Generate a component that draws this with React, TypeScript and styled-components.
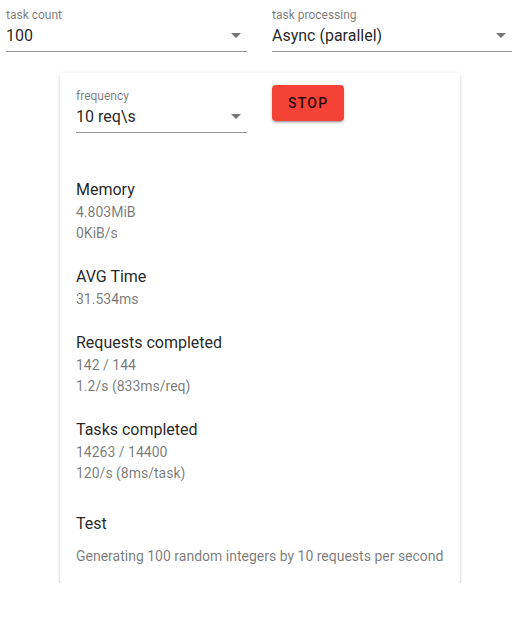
import React from "react";
import styled, { createGlobalStyle } from "styled-components";

const GlobalStyle = createGlobalStyle`
  html, body { margin: 0; padding: 0; background: #fff; }
  body { font-family: Roboto, "Liberation Sans", Arial, sans-serif; color: rgba(0,0,0,0.87); }
`;

const Page = styled.div`
  padding: 8px 4px 0 6px;
`;

const TopRow = styled.div`
  display: grid;
  grid-template-columns: 241px 240px;
  column-gap: 25px;
`;

const Field = styled.div<{ $width?: number }>`
  display: flex;
  flex-direction: column;
  width: ${(p) => (p.$width ? `${p.$width}px` : "auto")};
`;

const Label = styled.div`
  font-size: 12px;
  line-height: 14px;
  color: rgba(0, 0, 0, 0.54);
`;

const ValueRow = styled.div`
  margin-top: 4px;
  display: flex;
  align-items: center;
  justify-content: space-between;
  font-size: 16px;
  line-height: 19px;
  padding-bottom: 6px;
  border-bottom: 1px solid rgba(0, 0, 0, 0.42);
  color: rgba(0, 0, 0, 0.87);
`;

const Arrow = styled.span`
  width: 0;
  height: 0;
  margin-right: 6px;
  border-left: 5px solid transparent;
  border-right: 5px solid transparent;
  border-top: 5px solid rgba(0, 0, 0, 0.54);
`;

const Card = styled.div`
  width: 400px;
  margin: 21px 0 0 54px;
  box-sizing: border-box;
  padding: 12px 16px 16px 16px;
  background: #fff;
  border-radius: 2px;
  box-shadow: 0px 3px 1px -2px rgba(0, 0, 0, 0.2), 0px 2px 2px 0px rgba(0, 0, 0, 0.14),
    0px 1px 5px 0px rgba(0, 0, 0, 0.12);
`;

const CardHeader = styled.div`
  display: grid;
  grid-template-columns: 171px auto;
  column-gap: 25px;
  align-items: start;
`;

const FieldWrap = styled.div`
  padding-top: 4px;
`;

const StopButton = styled.button`
  justify-self: start;
  height: 36px;
  padding: 0 16px;
  border: none;
  border-radius: 4px;
  background: #f44336;
  color: rgba(0, 0, 0, 0.87);
  font-family: Roboto, "Liberation Sans", Arial, sans-serif;
  font-size: 14px;
  font-weight: 500;
  letter-spacing: 1.25px;
  text-transform: uppercase;
  box-shadow: 0px 3px 1px -2px rgba(0, 0, 0, 0.2), 0px 2px 2px 0px rgba(0, 0, 0, 0.14),
    0px 1px 5px 0px rgba(0, 0, 0, 0.12);
  cursor: pointer;
`;

const Stats = styled.div`
  display: flex;
  flex-direction: column;
  gap: 21px;
  margin-top: 45px;
`;

const Stat = styled.div`
  display: flex;
  flex-direction: column;
`;

const StatTitle = styled.div`
  font-size: 16px;
  line-height: 24px;
  color: rgba(0, 0, 0, 0.87);
`;

const StatLine = styled.div`
  font-size: 14px;
  line-height: 21px;
  color: rgba(0, 0, 0, 0.54);
`;

const TestBlock = styled.div`
  margin-top: 28px;
  display: flex;
  flex-direction: column;
  gap: 10px;
`;

const stats: { title: string; lines: string[] }[] = [
  { title: "Memory", lines: ["4.803MiB", "0KiB/s"] },
  { title: "AVG Time", lines: ["31.534ms"] },
  { title: "Requests completed", lines: ["142 / 144", "1.2/s (833ms/req)"] },
  { title: "Tasks completed", lines: ["14263 / 14400", "120/s (8ms/task)"] },
];

function Select({ label, value, width }: { label: string; value: string; width?: number }) {
  return (
    <Field $width={width}>
      <Label>{label}</Label>
      <ValueRow>
        <span>{value}</span>
        <Arrow />
      </ValueRow>
    </Field>
  );
}

export default function App() {
  return (
    <>
      <GlobalStyle />
      <Page>
        <TopRow>
          <Select label="task count" value="100" />
          <Select label="task processing" value="Async (parallel)" />
        </TopRow>
        <Card>
          <CardHeader>
            <FieldWrap>
              <Select label="frequency" value="10 req\s" />
            </FieldWrap>
            <StopButton>Stop</StopButton>
          </CardHeader>
          <Stats>
            {stats.map((s) => (
              <Stat key={s.title}>
                <StatTitle>{s.title}</StatTitle>
                {s.lines.map((l) => (
                  <StatLine key={l}>{l}</StatLine>
                ))}
              </Stat>
            ))}
          </Stats>
          <TestBlock>
            <StatTitle>Test</StatTitle>
            <StatLine>Generating 100 random integers by 10 requests per second</StatLine>
          </TestBlock>
        </Card>
      </Page>
    </>
  );
}
